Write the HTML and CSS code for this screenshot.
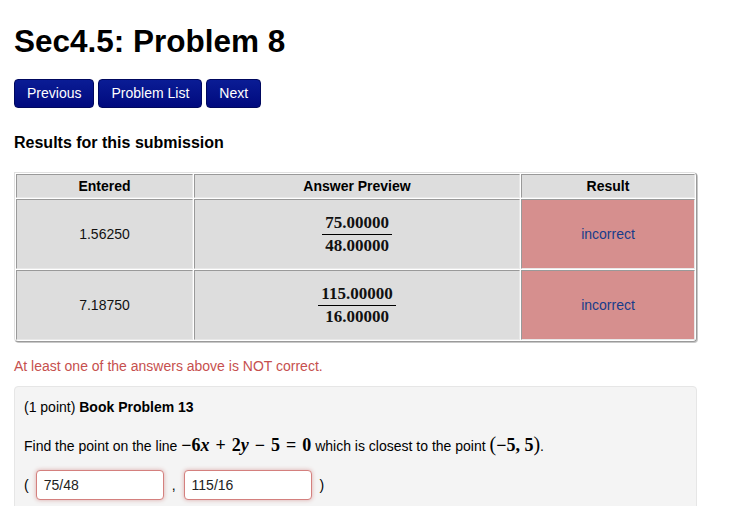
FILE: index.html
```html
<!DOCTYPE html>
<html>
<head>
<meta charset="utf-8">
<link rel="stylesheet" href="styles.css">
</head>
<body>
<div class="page">
  <h1 class="title">Sec4.5: Problem 8</h1>
  <div class="nav">
    <a class="btn">Previous</a>
    <a class="btn">Problem List</a>
    <a class="btn">Next</a>
  </div>
  <h3 class="results-title">Results for this submission</h3>
  <table class="results">
    <tr class="head">
      <th class="c1">Entered</th>
      <th class="c2">Answer Preview</th>
      <th class="c3">Result</th>
    </tr>
    <tr class="row">
      <td>1.56250</td>
      <td><span class="frac"><span class="num">75.00000</span><span class="den">48.00000</span></span></td>
      <td class="bad">incorrect</td>
    </tr>
    <tr class="row">
      <td>7.18750</td>
      <td><span class="frac"><span class="num">115.00000</span><span class="den">16.00000</span></span></td>
      <td class="bad">incorrect</td>
    </tr>
  </table>
  <p class="error">At least one of the answers above is NOT correct.</p>
  <div class="problem">
    <p class="pts">(1 point) <b>Book Problem 13</b></p>
    <p class="q">Find the point on the line <span class="math">&minus;6<i>x</i> + 2<i>y</i> &minus; 5 = 0</span> which is closest to the point <span class="math pt"><span class="paren">(</span>&minus;5, 5<span class="paren">)</span></span>.</p>
    <div class="answers">
      <span class="p">(</span>
      <span class="inp">75/48</span>
      <span class="comma">,</span>
      <span class="inp">115/16</span>
      <span class="p">)</span>
    </div>
  </div>
</div>
</body>
</html>
```
FILE: styles.css
```css
html, body {
  margin: 0;
  padding: 0;
  background: #fff;
}
body {
  font-family: "Liberation Sans", Arial, sans-serif;
  font-size: 14px;
  color: #000;
}
.page {
  padding: 0 0 0 14px;
  width: 683px;
}
.title {
  margin: 23px 0 0 0;
  font-size: 31.5px;
  line-height: 36px;
  font-weight: bold;
}
.nav {
  display: flex;
  gap: 4px;
  margin-top: 20px;
}
.btn {
  display: block;
  height: 29px;
  padding: 0 12px;
  box-sizing: border-box;
  color: #fff;
  font-size: 14px;
  border-radius: 4px;
  background: linear-gradient(#0a1c95, #000a7e);
  border: 1px solid #00085e;
  line-height: 27px;
}
.results-title {
  margin: 26px 0 0 0;
  font-size: 16px;
  line-height: 18px;
  font-weight: bold;
}
.results {
  margin-top: 20px;
  width: 683px;
  border-collapse: separate;
  border-spacing: 1px;
  border: 1px solid #9a9a9a;
  border-top-color: #e0e0e0;
  border-left-color: #e0e0e0;
  border-radius: 0 4px 4px 4px;
  box-shadow: 1px 1px 0 #c8c8c8;
  background: #fff;
}
.results th, .results td {
  background: #dddddd;
  border: 1px solid #999;
  border-right-color: #e8e8e8;
  border-bottom-color: #e8e8e8;
  text-align: center;
  padding: 0;
}
.results th {
  font-weight: bold;
  font-size: 14px;
  height: 22px;
}
.c1 { width: 175px; }
.c3 { width: 172px; }
.results td {
  height: 68px;
  font-size: 14px;
  color: #111;
}
.results td.bad {
  background: #d68f8e;
  color: #173c8a;
}
.frac {
  display: inline-flex;
  flex-direction: column;
  align-items: center;
  font-family: "Liberation Serif", "Times New Roman", serif;
  font-weight: bold;
  font-size: 17px;
  line-height: 20px;
  vertical-align: middle;
}
.num {
  padding: 0 3px 1px 3px;
  border-bottom: 1.5px solid #000;
}
.den {
  padding: 1px 3px 0 3px;
}
.error {
  margin: 14px 0 0 0;
  line-height: 20px;
  color: #c6504e;
}
.problem {
  margin-top: 10px;
  background: #f4f4f4;
  border: 1px solid #e6e6e6;
  border-radius: 4px;
  padding: 10px 9px 8px 9px;
  height: 200px;
}
.pts {
  margin: 0;
  line-height: 20px;
}
.q {
  margin: 17px 0 0 0;
  line-height: 20px;
}
.math {
  font-family: "Liberation Serif", "Times New Roman", serif;
  font-weight: bold;
  font-size: 18px;
  word-spacing: 1.5px;
}
.math.pt {
  word-spacing: 0;
}
.math i {
  font-style: italic;
}
.paren {
  font-weight: normal;
  font-size: 20px;
}
.answers {
  display: flex;
  align-items: center;
  margin-top: 14px;
}
.p, .comma {
  line-height: 30px;
}
.p:first-child { margin-right: 7px; }
.comma { margin: 0 8px 0 8px; }
.p:last-child { margin-left: 8px; }
.inp {
  display: block;
  width: 128px;
  height: 30px;
  box-sizing: border-box;
  line-height: 28px;
  padding: 0 7px;
  background: #fff;
  border: 1px solid #d4807e;
  border-radius: 4px;
  box-shadow: 0 0 4px rgba(190, 80, 78, 0.45);
  color: #222;
}
```
